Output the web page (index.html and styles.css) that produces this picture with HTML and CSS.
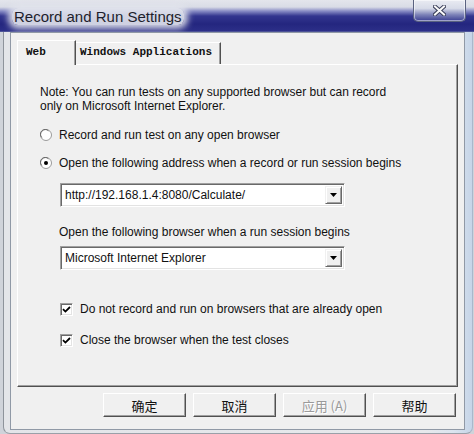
FILE: index.html
```html
<!DOCTYPE html>
<html>
<head>
<meta charset="utf-8">
<title>Record and Run Settings</title>
<link rel="stylesheet" href="styles.css">
</head>
<body>
<div class="window">
  <div class="titlebar">
    <span class="title">Record and Run Settings</span>
    <div class="close">
      <svg width="13" height="11" viewBox="0 0 13 11"><path d="M2 1.5 L11 9.5 M11 1.5 L2 9.5" stroke="#3a3f5a" stroke-width="4" stroke-linecap="square"/><path d="M2 1.5 L11 9.5 M11 1.5 L2 9.5" stroke="#fafafa" stroke-width="2" stroke-linecap="square"/></svg>
    </div>
  </div>
  <div class="frame">
    <div class="client">
      <div class="tabs">
        <div class="tab active">Web</div>
        <div class="tab">Windows Applications</div>
      </div>
      <div class="panel">
        <p class="note">Note: You can run tests on any supported browser but can record<br>only on Microsoft Internet Explorer.</p>
        <div class="row radio-row first">
          <svg class="radio" width="12" height="12" viewBox="0 0 12 12"><circle cx="6" cy="6" r="5.5" fill="#fff" stroke="#9a9a9a"/><path d="M1.8 8.5 A4.6 4.6 0 0 1 8.5 1.8" fill="none" stroke="#6a6a6a"/></svg>
          <span>Record and run test on any open browser</span>
        </div>
        <div class="row radio-row">
          <svg class="radio" width="12" height="12" viewBox="0 0 12 12"><circle cx="6" cy="6" r="5.5" fill="#fff" stroke="#9a9a9a"/><path d="M1.8 8.5 A4.6 4.6 0 0 1 8.5 1.8" fill="none" stroke="#6a6a6a"/><circle cx="6" cy="6" r="2" fill="#000"/></svg>
          <span>Open the following address when a record or run session begins</span>
        </div>
        <div class="combo combo-url">
          <span class="combo-text">http://192.168.1.4:8080/Calculate/</span>
          <span class="drop"><svg width="7" height="4" viewBox="0 0 7 4"><path d="M0 0 H7 L3.5 4 Z" fill="#000"/></svg></span>
        </div>
        <div class="row label">Open the following browser when a run session begins</div>
        <div class="combo combo-browser">
          <span class="combo-text">Microsoft Internet Explorer</span>
          <span class="drop"><svg width="7" height="4" viewBox="0 0 7 4"><path d="M0 0 H7 L3.5 4 Z" fill="#000"/></svg></span>
        </div>
        <div class="row check-row first">
          <span class="check"><svg width="9" height="9" viewBox="0 0 9 9"><path d="M1 4.2 L3.4 6.6 L8 2" fill="none" stroke="#000" stroke-width="1.8"/></svg></span>
          <span>Do not record and run on browsers that are already open</span>
        </div>
        <div class="row check-row">
          <span class="check"><svg width="9" height="9" viewBox="0 0 9 9"><path d="M1 4.2 L3.4 6.6 L8 2" fill="none" stroke="#000" stroke-width="1.8"/></svg></span>
          <span>Close the browser when the test closes</span>
        </div>
      </div>
      <div class="buttons">
        <div class="btn">确定</div>
        <div class="btn">取消</div>
        <div class="btn disabled">应用 (A)</div>
        <div class="btn">帮助</div>
      </div>
    </div>
  </div>
</div>
</body>
</html>
```

FILE: styles.css
```css
* { box-sizing: border-box; }
html, body { margin: 0; padding: 0; }
body {
  width: 474px;
  height: 434px;
  overflow: hidden;
  background: #a9adb3;
  font-family: "Liberation Sans", Arial, sans-serif;
  font-size: 12px;
  color: #111;
}
.window {
  width: 474px;
  height: 434px;
  display: flex;
  flex-direction: column;
  background: #cfd3da;
}
.titlebar {
  height: 32px;
  flex: none;
  display: flex;
  justify-content: space-between;
  align-items: flex-start;
  background:
    linear-gradient(to bottom, #e3e5ec 0px, #d9dce6 7px, #8a8ec6 11px, #33368f 16px, #24267f 24px, #2c2f88 31px, #6c74a8 32px),
    #24267f;
}
.title {
  margin: 8px 0 0 12px;
  font-size: 15px;
  line-height: 17px;
  color: #1e1e2c;
  background: rgba(226, 228, 236, 0.9);
  box-shadow: 0 0 6px 4px rgba(226, 228, 236, 0.9);
  border-radius: 6px;
  padding: 0 2px;
}
.close {
  width: 53px;
  height: 22px;
  margin-right: 8px;
  border: 1px solid #5a6280;
  border-top: none;
  border-radius: 0 0 5px 5px;
  background: linear-gradient(to bottom, #e9ebf2 0%, #d7dbe8 40%, #7d83b8 70%, #3a3e92 100%);
  box-shadow: inset 0 0 0 1px rgba(255,255,255,0.5);
  display: flex;
  align-items: center;
  justify-content: center;
}
.frame {
  flex: 1;
  margin: 0 1px 0 3px;
  border-left: 1px solid #8d939b;
  border-right: 1px solid #a9b7cc;
  border-bottom: 1px solid #9aa0a8;
  border-radius: 0 0 7px 7px;
  background: linear-gradient(to right, #e3e5e9 0%, #e7e9ec 90%, #dbe4ef 96%, #c6d5e8 100%);
  padding: 0 7px 3px 6px;
}
.client {
  height: 100%;
  background: #f0f0f0;
  border: 1px solid #9099a6;
  padding: 7px 0 0 6px;
}
.tabs {
  display: flex;
  align-items: flex-end;
  height: 24px;
  font-family: "Liberation Mono", "Courier New", monospace;
  font-size: 11px;
  font-weight: bold;
  color: #111;
}
.tab {
  height: 22px;
  line-height: 14px;
  padding: 2px 0 0 4px;
  border-top: 1px solid #fff;
  border-right: 1px solid #505050;
  box-shadow: inset -1px 0 0 #a0a0a0;
  background: #f0f0f0;
  width: 145px;
}
.tab.active {
  position: relative;
  z-index: 1;
  width: 59px;
  height: 25px;
  margin-bottom: -1px;
  padding: 4px 0 0 8px;
  border-left: 1px solid #fff;
}
.panel {
  width: 441px;
  height: 323px;
  border: 1px solid;
  border-color: #fff #505050 #505050 #fff;
  box-shadow: inset -1px -1px 0 #a0a0a0;
  padding: 20px 0 0 22px;
  display: flex;
  flex-direction: column;
  align-items: flex-start;
}
.note {
  margin: 0;
  line-height: 14px;
}
.row {
  height: 14px;
  line-height: 14px;
  display: flex;
  align-items: center;
  white-space: nowrap;
}
.radio-row { margin-top: 14px; }
.radio-row.first { margin-top: 15px; }
.radio { flex: none; margin-right: 7px; }
.combo {
  margin-left: 20px;
  width: 285px;
  height: 24px;
  border: 1px solid;
  border-color: #a0a0a0 #fff #fff #a0a0a0;
  box-shadow: inset 1px 1px 0 #696969, inset -1px -1px 0 #e3e3e3;
  background: #fff;
  padding: 2px;
  display: flex;
  align-items: center;
}
.combo-url { margin-top: 13px; }
.combo-browser { margin-top: 7px; }
.combo-text {
  flex: 1;
  padding-left: 2px;
  line-height: 14px;
}
.drop {
  width: 17px;
  height: 18px;
  border: 1px solid;
  border-color: #f0f0f0 #696969 #696969 #f0f0f0;
  box-shadow: inset 1px 1px 0 #fff, inset -1px -1px 0 #a0a0a0;
  background: #f0f0f0;
  display: flex;
  align-items: center;
  justify-content: center;
}
.label {
  margin-top: 18px;
  margin-left: 19px;
}
.check-row {
  margin-top: 17px;
  margin-left: 20px;
}
.check-row.first { margin-top: 32px; }
.check {
  flex: none;
  width: 13px;
  height: 13px;
  margin-right: 7px;
  border: 1px solid;
  border-color: #a0a0a0 #fff #fff #a0a0a0;
  box-shadow: inset 1px 1px 0 #696969, inset -1px -1px 0 #e3e3e3;
  background: #fff;
  display: flex;
  align-items: center;
  justify-content: center;
}
.buttons {
  display: flex;
  gap: 7px;
  margin: 6px 0 0 86px;
}
.btn {
  width: 83px;
  height: 24px;
  border: 1px solid;
  border-color: #fff #505050 #505050 #fff;
  box-shadow: inset -1px -1px 0 #a0a0a0;
  background: #f0f0f0;
  display: flex;
  align-items: center;
  justify-content: center;
  font-family: "Noto Sans CJK SC", "Liberation Sans", sans-serif;
  font-size: 13px;
  color: #111;
}
.btn.disabled {
  color: #9a9a9a;
  text-shadow: 1px 1px 0 #fff;
}
```
